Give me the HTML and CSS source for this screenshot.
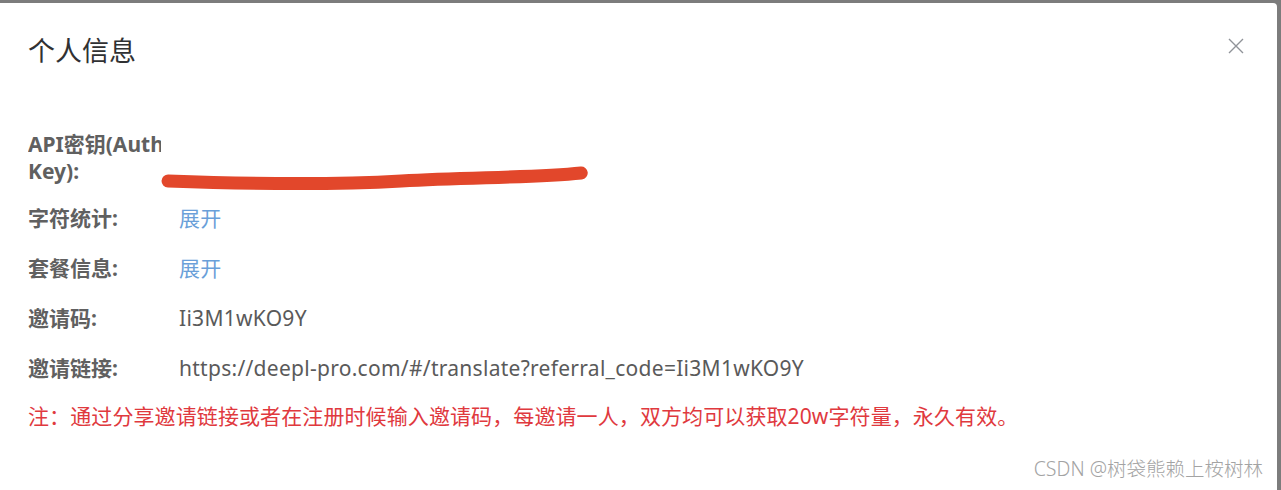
FILE: index.html
```html
<!DOCTYPE html>
<html lang="zh-CN">
<head>
    <meta charset="UTF-8">
    <meta name="viewport" content="width=device-width, initial-scale=1.0">
    <title>个人信息</title>
    <link rel="stylesheet" href="styles.css">
</head>
<body>
    <div class="dialog">
        <header class="dialog-header">
            <h1>个人信息</h1>
            <button class="close-btn" aria-label="关闭">
                <svg width="16" height="16" viewBox="0 0 16 16">
                    <path d="M1 1 L15 15 M15 1 L1 15" stroke="#909399" stroke-width="1.4" fill="none"/>
                </svg>
            </button>
        </header>

        <section class="dialog-body">
            <div class="row row-key">
                <label class="label"><span class="nowrap">API密钥(Auth</span> <span class="nowrap">Key):</span></label>
                <div class="value"></div>
                <svg class="redact" width="440" height="30" viewBox="0 0 440 30">
                    <path d="M9 19 C 90 22, 170 23, 240 19 S 370 16, 418 11" stroke="#e2472b" stroke-width="13" stroke-linecap="round" fill="none"/>
                </svg>
            </div>
            <div class="row">
                <label class="label">字符统计:</label>
                <div class="value"><a href="#" class="link">展开</a></div>
            </div>
            <div class="row">
                <label class="label">套餐信息:</label>
                <div class="value"><a href="#" class="link">展开</a></div>
            </div>
            <div class="row">
                <label class="label">邀请码:</label>
                <div class="value">Ii3M1wKO9Y</div>
            </div>
            <div class="row">
                <label class="label">邀请链接:</label>
                <div class="value">https://deepl-pro.com/#/translate?referral_code=Ii3M1wKO9Y</div>
            </div>
            <p class="note">注：通过分享邀请链接或者在注册时候输入邀请码，每邀请一人，双方均可以获取20w字符量，永久有效。</p>
        </section>

        <span class="watermark">CSDN @树袋熊赖上桉树林</span>
    </div>
</body>
</html>
```

FILE: styles.css
```css
* {
    margin: 0;
    padding: 0;
    box-sizing: border-box;
}

html, body {
    height: 100%;
}

body {
    font-family: "Noto Sans", "Noto Sans CJK SC", sans-serif;
    background-color: #7c7c7c;
    color: #606266;
    overflow: hidden;
}

.dialog {
    position: relative;
    margin: 3px 4px 0 0;
    height: calc(100% - 3px);
    background-color: #fff;
    border-radius: 0 4px 0 0;
}

.dialog-header {
    position: relative;
    padding: 30px 28px 0;
}

.dialog-header h1 {
    font-size: 27px;
    font-weight: normal;
    line-height: 36px;
    color: #303133;
}

.close-btn {
    position: absolute;
    top: 35px;
    right: 33px;
    width: 16px;
    height: 16px;
    border: none;
    background: none;
    cursor: pointer;
}

.close-btn svg {
    display: block;
}

.dialog-body {
    padding: 62px 28px 0;
}

.row {
    position: relative;
    display: flex;
    font-size: 21px;
    line-height: 27px;
    margin-bottom: 23px;
}

.row-key {
    margin-bottom: 20px;
}

.label {
    width: 133px;
    margin-right: 18px;
    flex-shrink: 0;
    overflow: hidden;
    font-weight: bold;
    color: #606060;
}

.nowrap {
    white-space: nowrap;
}

.value {
    color: #5a5a5a;
    white-space: nowrap;
    letter-spacing: 0.28px;
}

.link {
    color: #6a9fd9;
    text-decoration: none;
}

.redact {
    position: absolute;
    left: 131px;
    top: 31px;
}

.redact path {
    transform: scaleX(1.01);
}

.note {
    margin-top: -2px;
    font-size: 21px;
    line-height: 27px;
    color: #e0393e;
    letter-spacing: 0.1px;
}

.watermark {
    position: absolute;
    right: 14px;
    bottom: 8px;
    font-size: 19.5px;
    font-weight: 300;
    color: #a3a3a3;
}
```
